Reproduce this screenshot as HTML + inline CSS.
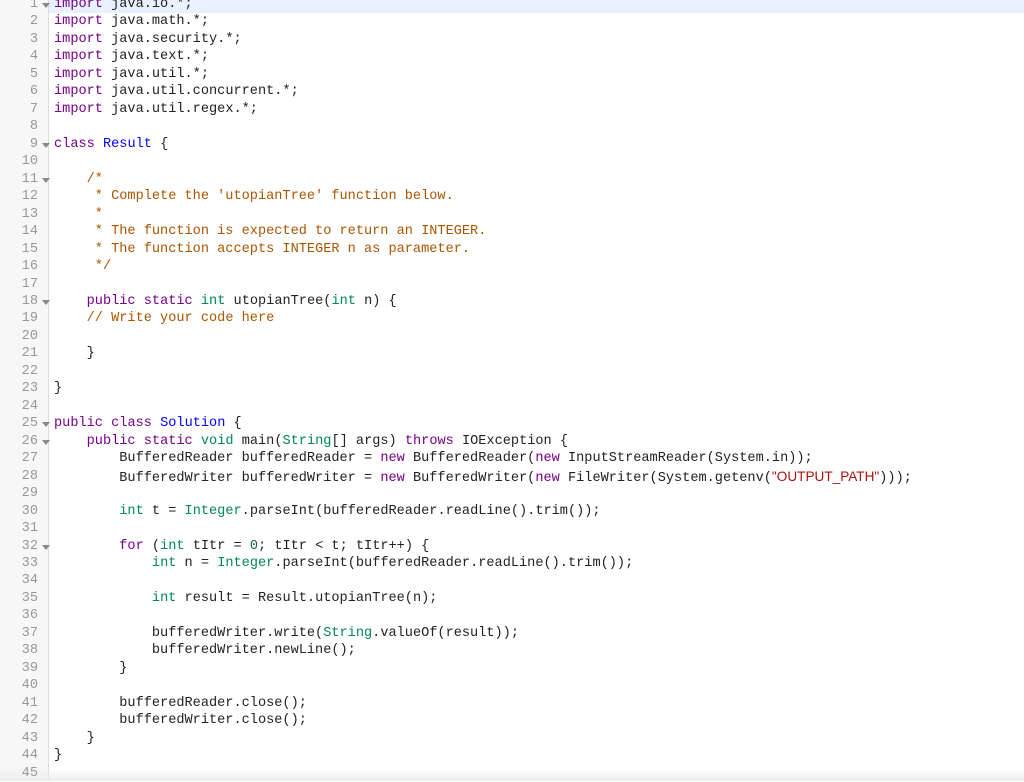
<!DOCTYPE html>
<html><head><style>
html,body{margin:0;padding:0;width:1024px;height:781px;overflow:hidden;background:#fff}
.g{position:absolute;left:0;top:0;width:48px;height:781px;background:#f7f7f7;border-right:1px solid #ddd}
.bot{position:absolute;left:0;right:0;bottom:0;height:12px;background:linear-gradient(rgba(255,255,255,0),#ececec)}
.wrap{position:absolute;left:0;top:-4px;width:1024px}
.l{position:relative;height:17.47px;line-height:17.47px;font-family:"Liberation Mono",monospace;font-size:13.6px;white-space:pre;color:#222}
.n{position:absolute;left:0;width:38px;text-align:right;color:#999}
.a{position:absolute;left:42px;top:7px;width:0;height:0;border-left:4px solid transparent;border-right:4px solid transparent;border-top:5px solid #888}
.c{position:absolute;left:54px}
.k{color:#770088}.t{color:#008855}.d{color:#0000ff}.m{color:#aa5500}.s{color:#aa1111;font-family:"Liberation Sans",sans-serif}.u{color:#116644}
.hl{position:absolute;left:49px;right:0;top:0;height:17.47px;background:#e8f2ff}
</style></head><body>
<div class="g"></div>
<div class="bot"></div>
<div class="wrap">
<div class="l"><div class="hl"></div><span class="n">1</span><i class="a"></i><span class="c"><span class="k">import</span> java.io.*;</span></div>
<div class="l"><span class="n">2</span><span class="c"><span class="k">import</span> java.math.*;</span></div>
<div class="l"><span class="n">3</span><span class="c"><span class="k">import</span> java.security.*;</span></div>
<div class="l"><span class="n">4</span><span class="c"><span class="k">import</span> java.text.*;</span></div>
<div class="l"><span class="n">5</span><span class="c"><span class="k">import</span> java.util.*;</span></div>
<div class="l"><span class="n">6</span><span class="c"><span class="k">import</span> java.util.concurrent.*;</span></div>
<div class="l"><span class="n">7</span><span class="c"><span class="k">import</span> java.util.regex.*;</span></div>
<div class="l"><span class="n">8</span></div>
<div class="l"><span class="n">9</span><i class="a"></i><span class="c"><span class="k">class</span> <span class="d">Result</span> {</span></div>
<div class="l"><span class="n">10</span></div>
<div class="l"><span class="n">11</span><i class="a"></i><span class="c">    <span class="m">/*</span></span></div>
<div class="l"><span class="n">12</span><span class="c"><span class="m">     * Complete the 'utopianTree' function below.</span></span></div>
<div class="l"><span class="n">13</span><span class="c"><span class="m">     *</span></span></div>
<div class="l"><span class="n">14</span><span class="c"><span class="m">     * The function is expected to return an INTEGER.</span></span></div>
<div class="l"><span class="n">15</span><span class="c"><span class="m">     * The function accepts INTEGER n as parameter.</span></span></div>
<div class="l"><span class="n">16</span><span class="c"><span class="m">     */</span></span></div>
<div class="l"><span class="n">17</span></div>
<div class="l"><span class="n">18</span><i class="a"></i><span class="c">    <span class="k">public</span> <span class="k">static</span> <span class="t">int</span> utopianTree(<span class="t">int</span> n) {</span></div>
<div class="l"><span class="n">19</span><span class="c">    <span class="m">// Write your code here</span></span></div>
<div class="l"><span class="n">20</span></div>
<div class="l"><span class="n">21</span><span class="c">    }</span></div>
<div class="l"><span class="n">22</span></div>
<div class="l"><span class="n">23</span><span class="c">}</span></div>
<div class="l"><span class="n">24</span></div>
<div class="l"><span class="n">25</span><i class="a"></i><span class="c"><span class="k">public</span> <span class="k">class</span> <span class="d">Solution</span> {</span></div>
<div class="l"><span class="n">26</span><i class="a"></i><span class="c">    <span class="k">public</span> <span class="k">static</span> <span class="t">void</span> main(<span class="t">String</span>[] args) <span class="k">throws</span> IOException {</span></div>
<div class="l"><span class="n">27</span><span class="c">        BufferedReader bufferedReader = <span class="k">new</span> BufferedReader(<span class="k">new</span> InputStreamReader(System.in));</span></div>
<div class="l"><span class="n">28</span><span class="c">        BufferedWriter bufferedWriter = <span class="k">new</span> BufferedWriter(<span class="k">new</span> FileWriter(System.getenv(<span class="s">"OUTPUT_PATH"</span>)));</span></div>
<div class="l"><span class="n">29</span></div>
<div class="l"><span class="n">30</span><span class="c">        <span class="t">int</span> t = <span class="t">Integer</span>.parseInt(bufferedReader.readLine().trim());</span></div>
<div class="l"><span class="n">31</span></div>
<div class="l"><span class="n">32</span><i class="a"></i><span class="c">        <span class="k">for</span> (<span class="t">int</span> tItr = <span class="u">0</span>; tItr &lt; t; tItr++) {</span></div>
<div class="l"><span class="n">33</span><span class="c">            <span class="t">int</span> n = <span class="t">Integer</span>.parseInt(bufferedReader.readLine().trim());</span></div>
<div class="l"><span class="n">34</span></div>
<div class="l"><span class="n">35</span><span class="c">            <span class="t">int</span> result = Result.utopianTree(n);</span></div>
<div class="l"><span class="n">36</span></div>
<div class="l"><span class="n">37</span><span class="c">            bufferedWriter.write(<span class="t">String</span>.valueOf(result));</span></div>
<div class="l"><span class="n">38</span><span class="c">            bufferedWriter.newLine();</span></div>
<div class="l"><span class="n">39</span><span class="c">        }</span></div>
<div class="l"><span class="n">40</span></div>
<div class="l"><span class="n">41</span><span class="c">        bufferedReader.close();</span></div>
<div class="l"><span class="n">42</span><span class="c">        bufferedWriter.close();</span></div>
<div class="l"><span class="n">43</span><span class="c">    }</span></div>
<div class="l"><span class="n">44</span><span class="c">}</span></div>
<div class="l"><span class="n">45</span></div>
</div>
</body></html>
